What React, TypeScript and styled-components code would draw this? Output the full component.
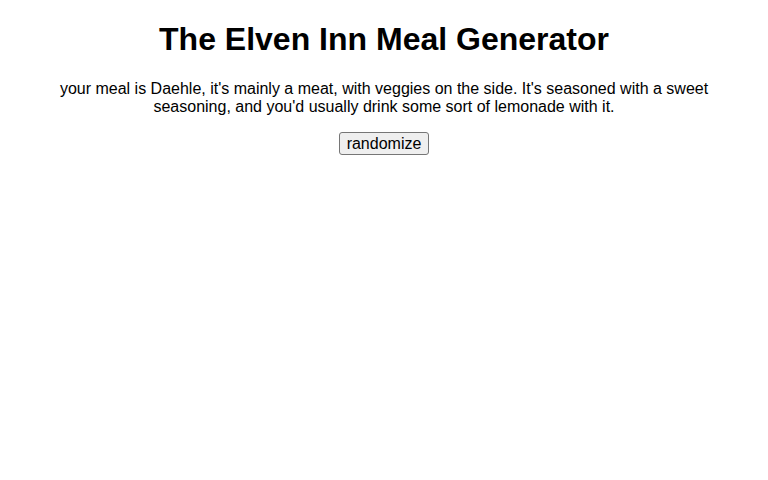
import * as React from 'react'
import styled, { createGlobalStyle } from 'styled-components'

const GlobalStyle = createGlobalStyle`
  body {
    margin: 0;
    font-family: "Liberation Sans", Arial, sans-serif;
    background: #fff;
    color: #000;
  }
`

const Wrapper = styled.div`
  display: flex;
  flex-direction: column;
  align-items: center;
  padding: 0 8px;
  text-align: center;
`

const Title = styled.h1`
  font-size: 32px;
  font-weight: bold;
  margin: 21.44px 0;
`

const Meal = styled.p`
  font-size: 16px;
  max-width: 700px;
  margin: 0 0 16px;
`

const RandomButton = styled.button`
  font-family: "Liberation Sans", Arial, sans-serif;
  font-size: 16px;
  color: #000;
  background: #efefef;
  border: 1px solid #767676;
  border-radius: 3px;
  padding: 2px 7px 1px;
  cursor: pointer;
`

const App: React.FC = () => {
  const meal = {
    name: 'Daehle',
    main: 'a meat',
    side: 'veggies',
    seasoning: 'a sweet',
    drink: 'some sort of lemonade',
  }

  return (
    <Wrapper>
      <GlobalStyle />
      <Title>The Elven Inn Meal Generator</Title>
      <Meal>
        your meal is {meal.name}, it's mainly {meal.main}, with {meal.side} on the side. It's seasoned with {meal.seasoning} seasoning, and you'd usually drink {meal.drink} with it.
      </Meal>
      <RandomButton>randomize</RandomButton>
    </Wrapper>
  )
}

export default App
